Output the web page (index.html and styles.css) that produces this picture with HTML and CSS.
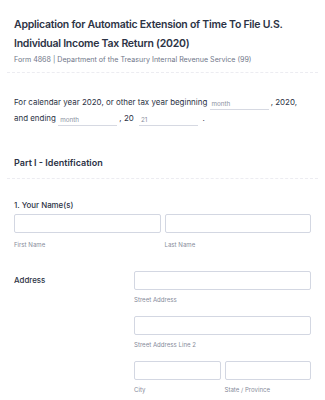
FILE: index.html
```html
<!DOCTYPE html>
<html>
<head>
<meta charset="utf-8">
<link rel="stylesheet" href="styles.css">
</head>
<body>
<div class="form">
  <div class="header">
    <h1 class="title">Application for Automatic Extension of Time To File U.S. Individual Income Tax Return (2020)</h1>
    <div class="subtitle">Form 4868 | Department of the Treasury Internal Revenue Service (99)</div>
  </div>
  <div class="para">
    <div class="line">For calendar year 2020, or other tax year beginning <span class="inl">month</span> , 2020,</div>
    <div class="line">and ending <span class="inl">month</span> , 20 <span class="inl val">21</span> &nbsp;.</div>
  </div>
  <div class="section">
    <div class="sec-title">Part I - Identification</div>
  </div>
  <div class="names">
    <div class="q-label">1. Your Name(s)</div>
    <div class="row2">
      <div class="field"><div class="box"></div><div class="sub first">First Name</div></div>
      <div class="field"><div class="box"></div><div class="sub first">Last Name</div></div>
    </div>
  </div>
  <div class="address">
    <div class="addr-label">Address</div>
    <div class="addr-fields">
      <div class="field"><div class="box"></div><div class="sub">Street Address</div></div>
      <div class="field"><div class="box"></div><div class="sub">Street Address Line 2</div></div>
      <div class="row2">
        <div class="field"><div class="box"></div><div class="sub">City</div></div>
        <div class="field"><div class="box"></div><div class="sub">State / Province</div></div>
      </div>
    </div>
  </div>
</div>
</body>
</html>
```
FILE: styles.css
```css
html, body { margin: 0; padding: 0; background: #fff; }
body { font-family: Inter, "Noto Sans", sans-serif; color: #2c3345; }
.form { padding: 0 7px; }
.header { padding: 15px 7px 6px; border-bottom: 1px dashed #ececf1; }
.title { margin: 0; font-size: 10.5px; letter-spacing: -0.25px; line-height: 19px; font-weight: 600; color: #2c3345; }
.subtitle { margin-top: 1px; font-size: 7.1px; line-height: 12px; color: #6f7689; }
.para { padding: 21px 7px 0; font-size: 7.95px; color: #2c3345; }
.line { height: 16px; line-height: 16px; white-space: nowrap; }
.inl { display: inline-block; width: 59px; border-bottom: 1px solid #d6d9e2; font-size: 6.3px; line-height: 9px; color: #8a8f9e; padding-left: 2px; box-sizing: border-box; vertical-align: -1px; }
.inl.val { margin-left: 3px; }
.section { margin-top: 30px; padding: 0 7px 8px; border-bottom: 1px dashed #ececf1; }
.sec-title { font-size: 9px; font-weight: 600; line-height: 14px; color: #2c3345; }
.names { padding: 20px 7px 0; }
.q-label { font-size: 7.9px; font-weight: 500; line-height: 12px; margin-bottom: 3px; }
.row2 { display: grid; grid-template-columns: 1fr 1fr; gap: 4px; }
.box { height: 19px; border: 1px solid #d3d7e2; border-radius: 2px; box-sizing: border-box; }
.sub { font-size: 6.1px; color: #878c9b; line-height: 10px; margin-top: 5px; }
.sub.first { margin-top: 7px; }
.address { display: flex; padding: 21px 7px 0; }
.addr-label { width: 120px; flex: none; font-size: 7.9px; font-weight: 500; line-height: 12px; padding-top: 3px; }
.addr-fields { flex: 1; display: flex; flex-direction: column; gap: 11px; }
```
